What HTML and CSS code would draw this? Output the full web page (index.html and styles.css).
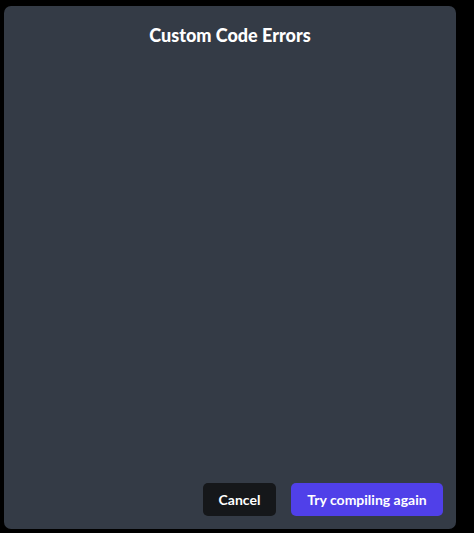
FILE: index.html
```html
<!DOCTYPE html>
<html>
<head>
<meta charset="utf-8">
<link rel="stylesheet" href="styles.css">
</head>
<body>
<div class="modal">
  <h1 class="title">Custom Code Errors</h1>
  <div class="content"></div>
  <div class="footer">
    <button class="btn btn-cancel">Cancel</button>
    <button class="btn btn-primary">Try compiling again</button>
  </div>
</div>
</body>
</html>
```
FILE: styles.css
```css
html, body {
  margin: 0;
  padding: 0;
  background: #000;
  height: 100%;
}
body {
  padding: 6px 18px 4px 4px;
  box-sizing: border-box;
  font-family: Lato, "Noto Sans", sans-serif;
}
.modal {
  height: 523px;
  width: 452px;
  background: #343b46;
  border-radius: 7px;
  display: flex;
  flex-direction: column;
  box-sizing: border-box;
}
.title {
  margin: 0;
  padding-top: 18px;
  text-align: center;
  color: #fff;
  font-size: 18px;
  font-weight: 900;
  line-height: 22px;
}
.content {
  flex: 1;
}
.footer {
  display: flex;
  justify-content: flex-end;
  gap: 15px;
  padding: 0 13px 13px 0;
}
.btn {
  border: none;
  border-radius: 5px;
  color: #fff;
  font-family: Lato, "Noto Sans", sans-serif;
  font-size: 14px;
  font-weight: 700;
  height: 33px;
  padding: 0 15px;
}
.btn-cancel {
  background: #15171a;
  width: 73px;
}
.btn-primary {
  background: #5040e9;
  width: 152px;
}
```
